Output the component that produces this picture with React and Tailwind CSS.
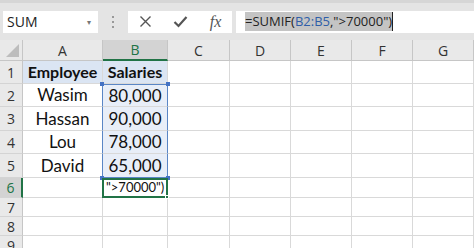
import React from "react";

const cols = ["A", "B", "C", "D", "E", "F", "G"];
const rowHeights = ["h-[23px]", "h-[23px]", "h-[24px]", "h-[23px]", "h-[24px]", "h-[20px]", "h-[19px]", "h-[19px]", "h-[14px]"];

const data = [
  ["Employee", "Salaries"],
  ["Wasim", "80,000"],
  ["Hassan", "90,000"],
  ["Lou", "78,000"],
  ["David", "65,000"],
];

const cellFont = { fontFamily: "Lato, 'Open Sans', sans-serif" };
const uiFont = { fontFamily: "'Open Sans', 'Noto Sans', sans-serif" };

const Toolbar = () => (
  <div className="flex items-center h-[40px] bg-[#e4e4e4] border-t-[3px] border-[#d6d6d6] pl-[3px]" style={uiFont}>
    <div className="flex items-center justify-between w-[95px] h-[22px] bg-white pl-[4px] pr-[7px]">
      <span className="text-[14px] text-[#222]">SUM</span>
      <span className="text-[8px] text-[#777]">▾</span>
    </div>
    <div className="flex flex-col gap-[3px] w-[30px] items-center">
      <span className="w-[2px] h-[2px] bg-[#999]" />
      <span className="w-[2px] h-[2px] bg-[#999]" />
      <span className="w-[2px] h-[2px] bg-[#999]" />
    </div>
    <div className="flex items-center justify-around w-[104px] h-[22px] bg-white">
      <svg width="13" height="13" viewBox="0 0 13 13">
        <path d="M1.5 1.5L11.5 11.5M11.5 1.5L1.5 11.5" stroke="#555" strokeWidth="1.4" />
      </svg>
      <svg width="15" height="13" viewBox="0 0 15 13">
        <path d="M1.5 7L5.5 11L13.5 2" stroke="#555" strokeWidth="2.2" fill="none" />
      </svg>
      <span className="text-[16px] italic text-[#555]" style={{ fontFamily: "'Liberation Serif', serif" }}>
        fx
      </span>
    </div>
    <div className="flex items-center flex-1 h-[22px] ml-[4px] bg-white pl-[9px]">
      <span className="flex items-center h-[19px] bg-[#c4c4c4] text-[13px] text-[#222] leading-none">
        =SUMIF(<span className="text-[#2f5ea8]">B2:B5</span>,"&gt;70000")
      </span>
      <span className="w-[1px] h-[19px] bg-[#222]" />
    </div>
  </div>
);

const Corner = ({ className }) => (
  <span className={`absolute w-[4px] h-[4px] ${className}`} />
);

const App = () => {
  return (
    <div className="w-[474px] h-[248px] overflow-hidden bg-white">
      <Toolbar />
      <div className="grid grid-cols-[23px_80px_65px_62px_61px_61px_61px_61px]">
        {/* header row */}
        <div className="relative h-[21px] bg-[#e9e9e9] border-r border-b border-[#c6c6c6]">
          <svg className="absolute right-[3px] bottom-[3px]" width="13" height="13" viewBox="0 0 13 13">
            <path d="M13 0L13 13L0 13Z" fill="#bdbdbd" />
          </svg>
        </div>
        {cols.map((c) =>
          c === "B" ? (
            <div
              key={c}
              className="h-[21px] flex items-center justify-center bg-[#d3d3d3] border-r border-[#c6c6c6] border-b-2 border-b-[#217346] text-[14px] text-[#217346]"
              style={uiFont}
            >
              {c}
            </div>
          ) : (
            <div
              key={c}
              className="h-[21px] flex items-center justify-center bg-[#e9e9e9] border-r border-b border-[#c6c6c6] text-[14px] text-[#333]"
              style={uiFont}
            >
              {c}
            </div>
          )
        )}

        {rowHeights.map((h, r) => {
          const row = data[r];
          const isActive = r === 5;
          return (
            <React.Fragment key={r}>
              <div
                className={`${h} flex justify-center overflow-hidden text-[14px] leading-[19px] border-b border-[#d4d4d4] ${
                  r === 8 ? "items-start" : "items-center"
                } ${
                  isActive
                    ? "bg-[#d3d3d3] text-[#217346] border-r-2 border-r-[#217346]"
                    : "bg-[#e9e9e9] text-[#333] border-r border-r-[#c6c6c6]"
                }`}
                style={uiFont}
              >
                {r + 1}
              </div>
              {cols.map((c, ci) => {
                if (ci === 0) {
                  return (
                    <div
                      key={c}
                      className={`${h} flex items-center justify-center border-r border-b border-[#d9d9d9] text-[#111] ${
                        r === 0 ? "bg-[#dbe5f3] font-bold text-[16px]" : "text-[17px]"
                      }`}
                      style={cellFont}
                    >
                      {row ? row[0] : ""}
                    </div>
                  );
                }
                if (ci === 1 && r === 0) {
                  return (
                    <div
                      key={c}
                      className={`${h} flex items-center justify-center bg-[#dbe5f3] border-r border-b border-[#d9d9d9] font-bold text-[16px] text-[#111]`}
                      style={cellFont}
                    >
                      {row[1]}
                    </div>
                  );
                }
                if (ci === 1 && r >= 1 && r <= 4) {
                  return (
                    <div
                      key={c}
                      className={`relative ${h} flex items-center justify-center bg-[#e8eef8] border-r border-b border-[#d9d9d9] border-l border-l-[#5a86c5] border-r-[#5a86c5] ${
                        r === 1 ? "border-t border-t-[#5a86c5]" : ""
                      } ${r === 4 ? "border-b-[#5a86c5]" : ""} -ml-[1px] text-[17px] text-[#111]`}
                      style={cellFont}
                    >
                      {row[1]}
                      {r === 1 && (
                        <>
                          <Corner className="-top-[3px] -left-[3px] bg-[#4472c4]" />
                          <Corner className="-top-[3px] -right-[3px] bg-[#4472c4]" />
                        </>
                      )}
                      {r === 4 && (
                        <>
                          <Corner className="-bottom-[3px] -left-[3px] bg-[#4472c4]" />
                          <Corner className="-bottom-[3px] -right-[3px] bg-[#4472c4]" />
                        </>
                      )}
                    </div>
                  );
                }
                if (ci === 1 && isActive) {
                  return (
                    <div
                      key={c}
                      className={`relative ${h} flex items-center pl-[2px] -ml-[1px] border-2 border-[#217346] text-[13px] text-[#111] whitespace-nowrap`}
                      style={cellFont}
                    >
                      "&gt;70000")
                      <span className="absolute -right-[3px] -bottom-[3px] w-[4px] h-[4px] bg-[#217346] border border-white" />
                    </div>
                  );
                }
                return <div key={c} className={`${h} border-r border-b border-[#d9d9d9]`} />;
              })}
            </React.Fragment>
          );
        })}
      </div>
    </div>
  );
};

export default App;
